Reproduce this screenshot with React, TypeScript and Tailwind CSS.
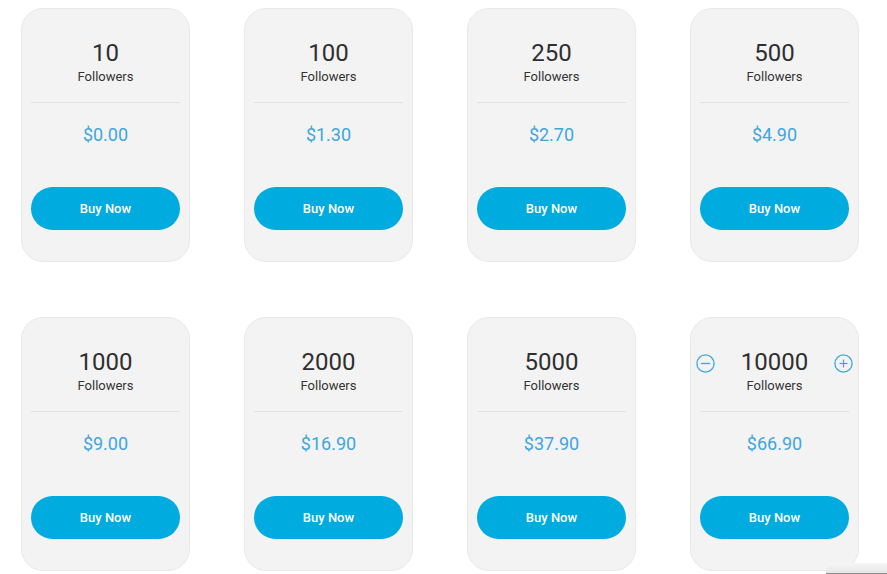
import React from "react";

const plans = [
  { n: "10", p: "$0.00" },
  { n: "100", p: "$1.30" },
  { n: "250", p: "$2.70" },
  { n: "500", p: "$4.90" },
  { n: "1000", p: "$9.00" },
  { n: "2000", p: "$16.90" },
  { n: "5000", p: "$37.90" },
  { n: "10000", p: "$66.90", custom: true },
];

function MinusIcon() {
  return (
    <svg width="19" height="19" viewBox="0 0 19 19" fill="none">
      <circle cx="9.5" cy="9.5" r="8.6" stroke="#3ea6de" strokeWidth="1.3" />
      <line x1="4.8" y1="9.5" x2="14.2" y2="9.5" stroke="#3ea6de" strokeWidth="1.3" />
    </svg>
  );
}

function PlusIcon() {
  return (
    <svg width="19" height="19" viewBox="0 0 19 19" fill="none">
      <circle cx="9.5" cy="9.5" r="8.6" stroke="#3ea6de" strokeWidth="1.3" />
      <line x1="5.5" y1="9.5" x2="13.5" y2="9.5" stroke="#3ea6de" strokeWidth="1.2" />
      <line x1="9.5" y1="5.5" x2="9.5" y2="13.5" stroke="#3ea6de" strokeWidth="1.2" />
    </svg>
  );
}

function Card({ n, p, custom }: { n: string; p: string; custom?: boolean }) {
  return (
    <div className="relative flex h-[254px] w-[169px] flex-col items-stretch rounded-[22px] border border-[#e9e9e9] bg-[#f3f3f3] px-[9px] pt-[30px]">
      {custom && (
        <>
          <div className="absolute left-[5px] top-[36px]">
            <MinusIcon />
          </div>
          <div className="absolute right-[5px] top-[36px]">
            <PlusIcon />
          </div>
        </>
      )}
      <div className="text-center text-[24px] leading-[28px] text-[#2f2f2f]">{n}</div>
      <div className="mt-[2px] text-center text-[13px] leading-[16px] text-[#333]">Followers</div>
      <div className="mt-[17px] h-px bg-[#e2e2e2]" />
      <div className="mt-[20px] text-center text-[18px] leading-[24px] text-[#3ea6de]">{p}</div>
      <button className="mt-[40px] h-[43px] w-full rounded-full bg-[#00abdf] text-[13px] font-medium text-white">
        Buy Now
      </button>
    </div>
  );
}

export default function App() {
  return (
    <div
      className="relative h-[574px] w-[887px] overflow-hidden bg-white"
      style={{ fontFamily: "Roboto, 'Liberation Sans', sans-serif" }}
    >
      <div className="grid grid-cols-[169px_169px_169px_169px] gap-x-[54px] gap-y-[55px] pl-[21px] pt-[8px]">
        {plans.map((pl) => (
          <Card key={pl.n} {...pl} />
        ))}
      </div>
      <div className="absolute left-[826px] top-[563px] h-[11px] w-[61px] rounded-tl-[8px] border-b border-[#8a8a8a] bg-gradient-to-b from-[#f6f6f6] to-[#e6e6e6]" />
    </div>
  );
}
